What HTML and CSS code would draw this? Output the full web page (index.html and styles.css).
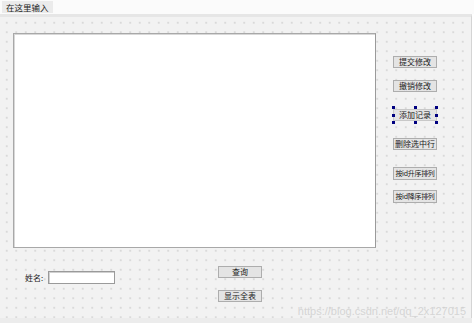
FILE: index.html
```html
<!DOCTYPE html>
<html>
<head>
<meta charset="utf-8">
<link rel="stylesheet" href="styles.css">
</head>
<body>
<div class="tabbar"><span class="tab">在这里输入</span></div>
<div class="canvas">
  <div class="toprow">
    <div class="list"></div>
    <div class="side">
      <div class="btn b1">提交修改</div>
      <div class="btn b2">撤销修改</div>
      <div class="btn b3 selected">添加记录
        <i class="h tl"></i><i class="h tm"></i><i class="h tr"></i>
        <i class="h ml"></i><i class="h mr"></i>
        <i class="h bl"></i><i class="h bm"></i><i class="h br"></i>
      </div>
      <div class="btn b4">删除选中行</div>
      <div class="btn b5 tight">按id升序排列</div>
      <div class="btn b6 tight">按id降序排列</div>
    </div>
  </div>
  <div class="bottomrow">
    <div class="namefield">
      <span class="label">姓名:</span>
      <span class="input"></span>
    </div>
    <div class="bbtns">
      <div class="btn">查询</div>
      <div class="btn b7">显示全表</div>
    </div>
  </div>
  <div class="watermark">https://blog.csdn.net/qq_2x127015</div>
</div>
<div class="footer"></div>
</body>
</html>
```
FILE: styles.css
```css
html, body {
  margin: 0;
  padding: 0;
  background: #ffffff;
  font-family: "Noto Sans CJK SC", "DejaVu Sans", sans-serif;
  font-size: 8px;
  color: #222;
  width: 474px;
  height: 323px;
  overflow: hidden;
}
.tabbar {
  height: 14px;
  padding-left: 2px;
  padding-top: 1px;
  box-sizing: border-box;
  background: #fbfbfb;
}
.tab {
  display: inline-block;
  height: 12px;
  line-height: 12px;
  padding: 0 4px;
  background: #ebebeb;
  font-size: 8.5px;
  color: #222;
}
.canvas {
  position: relative;
  width: 472px;
  height: 304px;
  box-sizing: border-box;
  border-top: 3px solid #e6e6e6;
  border-right: 1px solid #d4d4d4;
  background-color: #f2f2f2;
  background-image: radial-gradient(circle, #d2d2d2 0.6px, transparent 0.9px);
  background-size: 9.5px 9.5px;
  background-position: 2px 1px;
}
.toprow {
  display: flex;
  padding-top: 16px;
  padding-left: 13px;
}
.list {
  width: 363px;
  height: 215px;
  box-sizing: border-box;
  background: #fff;
  border: 1px solid #a8a8a8;
  border-right-color: #9a9a9a;
  box-shadow: inset 1px 1px 0 #d8d8d8;
}
.side {
  display: flex;
  flex-direction: column;
  margin-left: 17px;
  padding-top: 23px;
}
.btn {
  position: relative;
  width: 44px;
  height: 12px;
  box-sizing: border-box;
  background: #e4e4e4;
  border: 1px solid #adadad;
  font-size: 8px;
  line-height: 10px;
  text-align: center;
  white-space: nowrap;
  color: #222;
}
.b2 { margin-top: 12px; }
.b3 { margin-top: 17px; border-color: #c8c8c8; }
.b4 { margin-top: 17px; }
.b5 { margin-top: 17px; height: 13px; }
.b6 { margin-top: 10px; height: 13px; }
.tight {
  font-size: 7px;
  line-height: 11px;
  letter-spacing: -0.3px;
}
.h {
  position: absolute;
  width: 3px;
  height: 3px;
  background: #000080;
}
.tl { left: -2px; top: -4px; }
.tm { left: 20px; top: -4px; }
.tr { right: -2px; top: -4px; }
.ml { left: -2px; top: 4px; }
.mr { right: -2px; top: 4px; }
.bl { left: -2px; bottom: -4px; }
.bm { left: 20px; bottom: -4px; }
.br { right: -2px; bottom: -4px; }
.bottomrow {
  display: flex;
  padding-top: 18px;
}
.namefield {
  display: flex;
  align-items: center;
  padding-left: 25px;
  padding-top: 5px;
  height: 13px;
}
.label {
  font-size: 8px;
  width: 23px;
}
.input {
  display: block;
  width: 67px;
  height: 13px;
  box-sizing: border-box;
  background: #fff;
  border: 1px solid #9a9a9a;
  box-shadow: inset 1px 1px 0 #d0d0d0;
}
.bbtns {
  display: flex;
  flex-direction: column;
  margin-left: 103px;
}
.b7 { margin-top: 12px; }
.watermark {
  position: absolute;
  right: 5px;
  bottom: 1px;
  font-family: "Liberation Sans", sans-serif;
  font-size: 11px;
  color: rgba(205, 205, 205, 0.8);
}
.footer {
  height: 5px;
  width: 472px;
  background: #ececec;
}
```
